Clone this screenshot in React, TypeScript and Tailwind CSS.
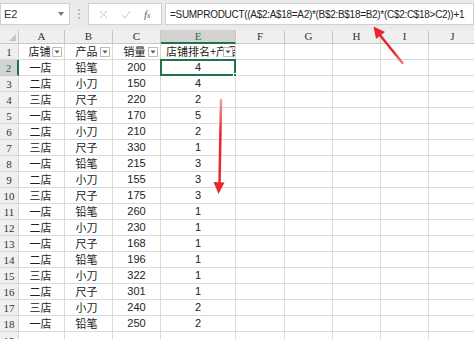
import React from "react";

const cols = ["A", "B", "C", "E", "F", "G", "H", "I", "J"];
const colW = ["w-[46px]", "w-[48px]", "w-[48px]", "w-[75px]", "w-[49px]", "w-[48px]", "w-[48px]", "w-[48px]", "w-[48px]"];

const data: [string, string, string, string][] = [
  ["一店", "铅笔", "200", "4"],
  ["二店", "小刀", "150", "4"],
  ["三店", "尺子", "220", "2"],
  ["一店", "铅笔", "170", "5"],
  ["二店", "小刀", "210", "2"],
  ["三店", "尺子", "330", "1"],
  ["一店", "铅笔", "215", "3"],
  ["二店", "小刀", "155", "3"],
  ["三店", "尺子", "175", "3"],
  ["一店", "铅笔", "260", "1"],
  ["二店", "小刀", "230", "1"],
  ["一店", "尺子", "168", "1"],
  ["二店", "铅笔", "196", "1"],
  ["三店", "小刀", "322", "1"],
  ["二店", "尺子", "301", "1"],
  ["三店", "小刀", "240", "2"],
  ["一店", "铅笔", "250", "2"],
];

const cjk = { fontFamily: '"Noto Sans CJK SC", "Liberation Sans", sans-serif' };
const num = { fontFamily: '"Liberation Sans", "Noto Sans CJK SC", sans-serif' };
const serif = { fontFamily: '"Liberation Serif", "Noto Sans CJK SC", serif' };

function Filter() {
  return (
    <div className="absolute right-[2px] top-[3px] flex h-[10px] w-[10px] items-center justify-center border border-[#b9b9b9] bg-white">
      <svg width="6" height="4" viewBox="0 0 6 4">
        <path d="M0.5 0.5 L5.5 0.5 L3 3.5 Z" fill="#555" />
      </svg>
    </div>
  );
}

export default function App() {
  return (
    <div className="relative h-[339px] w-[474px] overflow-hidden bg-white">
      {/* formula bar */}
      <div className="flex h-[30px] items-start bg-[#ebebeb] pt-[3px]">
        <div className="flex h-[22px] w-[70px] shrink-0 items-center justify-between border border-[#d0d0d0] bg-white pl-[3px] pr-[5px] text-[11px] text-[#333]" style={num}>
          <span>E2</span>
          <svg width="6" height="4" viewBox="0 0 6 4"><path d="M0 0 L6 0 L3 4 Z" fill="#777" /></svg>
        </div>
        <div className="flex h-[22px] w-[18px] shrink-0 flex-col items-center justify-center gap-[2px]">
          <div className="h-[2px] w-[2px] bg-[#bbb]" />
          <div className="h-[2px] w-[2px] bg-[#bbb]" />
          <div className="h-[2px] w-[2px] bg-[#bbb]" />
        </div>
        <div className="flex h-[22px] w-[74px] shrink-0 items-center justify-around border border-[#d0d0d0] bg-white px-[4px]">
          <svg width="9" height="9" viewBox="0 0 9 9"><path d="M1 1 L8 8 M8 1 L1 8" stroke="#c4c4c4" strokeWidth="1" /></svg>
          <svg width="10" height="9" viewBox="0 0 10 9"><path d="M1 5 L4 8 L9 1" stroke="#c4c4c4" strokeWidth="1" fill="none" /></svg>
          <span className="text-[11px] italic text-[#666]" style={serif}>f<span className="text-[8px]">x</span></span>
        </div>
        <div className="ml-[3px] flex h-[22px] min-w-0 flex-1 items-center overflow-hidden whitespace-nowrap border border-[#d0d0d0] bg-white pl-[4px] text-[10px] tracking-[-0.3px] text-[#222]" style={num}>
          =SUMPRODUCT((A$2:A$18=A2)*(B$2:B$18=B2)*(C$2:C$18&gt;C2))+1
        </div>
      </div>

      {/* sheet */}
      <div className="flex flex-col">
        {/* header row */}
        <div className="flex h-[14px]">
          <div className="relative w-[19px] shrink-0 border-b border-r border-[#c8c8c8] bg-[#efefef]">
            <svg className="absolute bottom-[2px] right-[2px]" width="7" height="7" viewBox="0 0 7 7"><path d="M7 0 L7 7 L0 7 Z" fill="#c4c4c4" /></svg>
          </div>
          {cols.map((c, i) => (
            <div
              key={c}
              className={`${colW[i]} shrink-0 flex items-center justify-center border-r text-[11px] ${
                c === "E" ? "border-b-2 border-b-[#217346] border-r-[#c8c8c8] bg-[#d3d3d3] text-[#217346]" : "border-b border-[#c8c8c8] bg-[#efefef] text-[#333]"
              }`}
              style={serif}
            >
              {c}
            </div>
          ))}
        </div>
        {/* row 1 */}
        <div className="flex h-[16px]">
          <div className="flex w-[19px] shrink-0 items-end justify-center border-b border-r border-[#d4d4d4] bg-[#efefef] text-[11px] leading-[14px] text-[#333]" style={serif}>1</div>
          {["店铺", "产品", "销量", "店铺排名+产品"].map((t, i) => (
            <div key={i} className={`${colW[i]} relative shrink-0 overflow-hidden border-b border-r border-[#dadada] text-[11px] text-[#222]`} style={cjk}>
              <div className={`flex h-full items-center whitespace-nowrap ${i === 3 ? "pl-[5px]" : "justify-center pr-[4px]"}`}>{t}</div>
              <Filter />
            </div>
          ))}
          {[4, 5, 6, 7, 8].map((i) => (
            <div key={i} className={`${colW[i]} shrink-0 border-b border-r border-[#dadada]`} />
          ))}
        </div>
        {data.map((r, ri) => {
          const rowNum = ri + 2;
          const sel = rowNum === 2;
          return (
            <div key={ri} className="flex h-[16px]">
              <div
                className={`flex w-[19px] shrink-0 items-end justify-center border-b text-[11px] leading-[14px] ${
                  sel ? "border-r-2 border-r-[#217346] border-b-[#c8c8c8] bg-[#d3d3d3] text-[#217346]" : "border-r border-[#d4d4d4] bg-[#efefef] text-[#333]"
                }`}
                style={serif}
              >
                {rowNum}
              </div>
              {r.map((v, i) => (
                <div
                  key={i}
                  className={`${colW[i]} relative flex shrink-0 items-center justify-center border-b border-r border-[#dadada] text-[11px] text-[#222]`}
                  style={i < 2 ? cjk : num}
                >
                  {sel && i === 3 && (
                    <div className="absolute left-[-1px] top-[-1px] h-[17px] w-[76px] border-2 border-[#217346]">
                      <div className="absolute bottom-[-3px] right-[-3px] h-[4px] w-[4px] border border-white bg-[#217346]" />
                    </div>
                  )}
                  <span className={i === 0 ? "pr-[2px]" : i === 1 ? "pr-[4px]" : ""}>{v}</span>
                </div>
              ))}
              {[4, 5, 6, 7, 8].map((i) => (
                <div key={i} className={`${colW[i]} shrink-0 border-b border-r border-[#dadada]`} />
              ))}
            </div>
          );
        })}
        <div className="flex h-[16px]">
          <div className="flex w-[19px] shrink-0 items-end justify-center border-r border-[#d4d4d4] bg-[#efefef] text-[11px] leading-[14px] text-[#333]" style={serif}>19</div>
          {cols.map((c, i) => (
            <div key={c} className={`${colW[i]} shrink-0 border-r border-[#dadada]`} />
          ))}
        </div>
      </div>

      {/* arrows overlay */}
      <svg className="pointer-events-none absolute left-0 top-0" width="474" height="339" viewBox="0 0 474 339">
        <defs>
          <linearGradient id="g1" x1="0" y1="100" x2="0" y2="193" gradientUnits="userSpaceOnUse">
            <stop offset="0" stopColor="#f2a0a0" />
            <stop offset="0.35" stopColor="#e8262b" />
            <stop offset="1" stopColor="#e8262b" />
          </linearGradient>
          <linearGradient id="g2" x1="403" y1="63" x2="374" y2="27" gradientUnits="userSpaceOnUse">
            <stop offset="0" stopColor="#f08080" />
            <stop offset="0.3" stopColor="#e8262b" />
            <stop offset="1" stopColor="#e8262b" />
          </linearGradient>
        </defs>
        <path d="M221 100 L219.5 184" stroke="url(#g1)" strokeWidth="2.5" strokeLinecap="round" />
        <path d="M213.5 182 L218.5 194 L224.5 182.5 Z" fill="#e8262b" />
        <path d="M402.5 63 L379 34" stroke="url(#g2)" strokeWidth="2.5" strokeLinecap="round" />
        <path d="M373.5 26.5 L376 39 L385 32 Z" fill="#e8262b" />
      </svg>
    </div>
  );
}
